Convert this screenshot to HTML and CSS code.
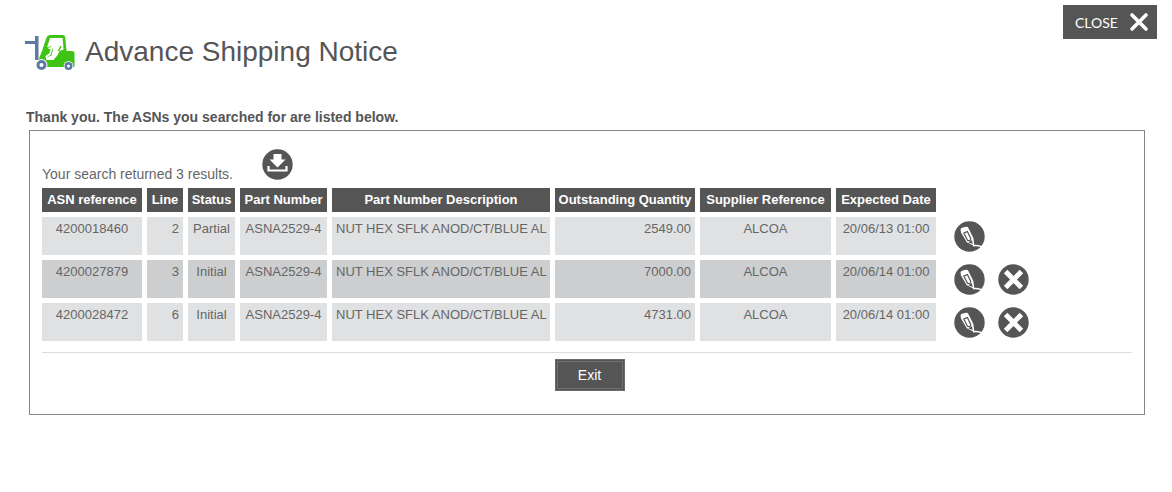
FILE: index.html
```
<!DOCTYPE html>
<html lang="en">
<head>
    <meta charset="UTF-8">
    <meta name="viewport" content="width=device-width, initial-scale=1.0">
    <title>Advance Shipping Notice</title>
    <link rel="stylesheet" href="styles.css">
</head>
<body>
    <!-- Shared icons -->
    <svg class="icon-defs" aria-hidden="true">
        <symbol id="icon-edit" viewBox="0 0 31 31">
            <circle cx="15.5" cy="15.5" r="15.2" fill="#555556"/>
            <path d="M7 11.5L6.6 9Q6.400 7.400 8 6.800L12 5.800Q13.600 5.600 14.400 7L19.400 17L20.400 25L12.800 21.200Z" fill="#fff"/>
            <path d="M9.800 12L13.400 10.600L16.800 17.600L16 19.600L13.600 19.400Z" fill="#fff" stroke="#555556" stroke-width="1.200"/>
            <path d="M14.200 21.200L18 19.200L18.600 23Z" fill="#555556"/>
            <path d="M19 24.800Q22.500 24 27.500 25.600" fill="none" stroke="#fff" stroke-width="1.500"/>
        </symbol>
        <symbol id="icon-delete" viewBox="0 0 31 31">
            <circle cx="15.5" cy="15.5" r="15.2" fill="#555556"/>
            <path d="M7.6 7.6L23.4 23.4M23.4 7.6L7.6 23.4" fill="none" stroke="#fff" stroke-width="5"/>
        </symbol>
    </svg>

    <header class="page-header">
        <div class="page-title">
            <svg class="logo" viewBox="0 0 50 36" aria-hidden="true">
                <path d="M0 7H10V2H13.5V26H10V10H0Z" fill="#5b7ba3"/>
                <!-- cab and body -->
                <path d="M25 1H38Q40 1 40.200 3L41.600 17H47Q49.500 17 49.500 19.500V33H20L13.500 26L17 17L21.500 3.500Q22.500 1 25 1Z" fill="#3fc314"/>
                <path d="M25 4H37.600L38.600 15.500L34.500 17L32 22L29 25H23L22.500 23L26.500 21.500L28 15L26 12.500L22 13.500Z" fill="#fff"/>
                <path d="M22 14Q25 11.500 28 13.500Q28 17 26 21L21 22L19 20Z" fill="#3fc314"/>
                <path d="M23.500 14.500L27 13.500L25 20L21.500 22.500L22 25H29" fill="none" stroke="#fff" stroke-width="1.800"/>
                <path d="M33.500 17L36 12" stroke="#3fc314" stroke-width="1.500"/>
                <!-- wheels -->
                <circle cx="16.500" cy="31" r="6" fill="#fff"/>
                <circle cx="16.500" cy="31" r="5" fill="#5b7ba3"/>
                <circle cx="16.500" cy="31" r="2" fill="#fff"/>
                <circle cx="43.500" cy="32" r="4.800" fill="#fff"/>
                <circle cx="43.500" cy="32" r="4" fill="#5b7ba3"/>
                <circle cx="43.500" cy="32" r="1.500" fill="#fff"/>
            </svg>
            <h1>Advance Shipping Notice</h1>
        </div>
        <button type="button" class="close-button">
            CLOSE
            <svg viewBox="0 0 20 20" aria-hidden="true">
                <path d="M3 3L17 17M17 3L3 17" fill="none" stroke="#fff" stroke-width="3.6" stroke-linecap="round"/>
            </svg>
        </button>
    </header>

    <main>
        <p class="message">Thank you. The ASNs you searched for are listed below.</p>

        <div class="results">
            <div class="results-bar">
                <p>Your search returned 3 results.</p>
                <button type="button" class="icon-button" aria-label="Download">
                    <svg viewBox="0 0 31 31" aria-hidden="true">
                        <circle cx="15.5" cy="15.5" r="15.2" fill="#555556"/>
                        <path d="M11.5 5H19.5V10.500H23.500L15.500 18.500L7.500 10.500H11.500Z" fill="#fff"/>
                        <path d="M6.500 17V21.500H24.500V17" fill="none" stroke="#fff" stroke-width="2.200"/>
                    </svg>
                </button>
            </div>

            <table class="asn-table">
                <colgroup>
                    <col class="col-reference">
                    <col class="col-line">
                    <col class="col-status">
                    <col class="col-part">
                    <col class="col-description">
                    <col class="col-quantity">
                    <col class="col-supplier">
                    <col class="col-date">
                    <col class="col-actions">
                </colgroup>
                <thead>
                    <tr>
                        <th>ASN reference</th>
                        <th>Line</th>
                        <th>Status</th>
                        <th>Part Number</th>
                        <th>Part Number Description</th>
                        <th>Outstanding Quantity</th>
                        <th>Supplier Reference</th>
                        <th>Expected Date</th>
                        <td class="actions"></td>
                    </tr>
                </thead>
                <tbody>
                    <tr>
                        <td>4200018460</td>
                        <td class="number">2</td>
                        <td>Partial</td>
                        <td>ASNA2529-4</td>
                        <td>NUT HEX SFLK ANOD/CT/BLUE AL</td>
                        <td class="number">2549.00</td>
                        <td>ALCOA</td>
                        <td>20/06/13 01:00</td>
                        <td class="actions">
                            <div class="action-list">
                                <button type="button" class="icon-button" aria-label="Edit"><svg><use href="#icon-edit"/></svg></button>
                            </div>
                        </td>
                    </tr>
                    <tr>
                        <td>4200027879</td>
                        <td class="number">3</td>
                        <td>Initial</td>
                        <td>ASNA2529-4</td>
                        <td>NUT HEX SFLK ANOD/CT/BLUE AL</td>
                        <td class="number">7000.00</td>
                        <td>ALCOA</td>
                        <td>20/06/14 01:00</td>
                        <td class="actions">
                            <div class="action-list">
                                <button type="button" class="icon-button" aria-label="Edit"><svg><use href="#icon-edit"/></svg></button>
                                <button type="button" class="icon-button" aria-label="Delete"><svg><use href="#icon-delete"/></svg></button>
                            </div>
                        </td>
                    </tr>
                    <tr>
                        <td>4200028472</td>
                        <td class="number">6</td>
                        <td>Initial</td>
                        <td>ASNA2529-4</td>
                        <td>NUT HEX SFLK ANOD/CT/BLUE AL</td>
                        <td class="number">4731.00</td>
                        <td>ALCOA</td>
                        <td>20/06/14 01:00</td>
                        <td class="actions">
                            <div class="action-list">
                                <button type="button" class="icon-button" aria-label="Edit"><svg><use href="#icon-edit"/></svg></button>
                                <button type="button" class="icon-button" aria-label="Delete"><svg><use href="#icon-delete"/></svg></button>
                            </div>
                        </td>
                    </tr>
                </tbody>
            </table>

            <div class="results-footer">
                <button type="button" class="exit-button">Exit</button>
            </div>
        </div>
    </main>
</body>
</html>
```
FILE: styles.css
```
body {
    font-family: "Liberation Sans", Arial, sans-serif;
    font-size: 14px;
    line-height: 16px;
    color: #555556;
    background-color: #ffffff;
    margin: 0;
}
h1, p {
    margin: 0;
}
button {
    font-family: inherit;
    color: #ffffff;
    background-color: #555556;
    cursor: pointer;
}
.icon-defs {
    display: none;
}

/* Header */
.page-header {
    display: flex;
    justify-content: space-between;
    align-items: flex-start;
    padding: 5px 15px 0 25px;
}
.page-title {
    display: flex;
    align-items: center;
    gap: 10px;
    padding-top: 29px;
}
.logo {
    width: 50px;
    height: 36px;
}
h1 {
    font-size: 28px;
    font-weight: normal;
    line-height: 36px;
}
.close-button {
    display: flex;
    align-items: center;
    justify-content: space-between;
    width: 94px;
    height: 34px;
    padding: 0 8px 0 12px;
    border: none;
    font-family: Lato, sans-serif;
    font-size: 14px;
}
.close-button svg {
    width: 20px;
    height: 20px;
}

/* Results */
main {
    padding: 39px 27px 0 26px;
}
.message {
    font-weight: bold;
}
.results {
    margin: 5px 0 0 3px;
    padding: 18px 12px 23px;
    border: 1px solid #858585;
}
.results-bar {
    display: flex;
    align-items: flex-end;
    gap: 29px;
    color: #666667;
}
.results-bar p {
    line-height: 12px;
}
.icon-button {
    width: 31px;
    height: 31px;
    padding: 0;
    border: none;
    background: none;
}
.icon-button svg {
    display: block;
    width: 31px;
    height: 31px;
}

/* Table */
.asn-table {
    table-layout: fixed;
    width: 997px;
    margin: 3px 0 0 -5px;
    border-spacing: 5px;
    font-size: 13px;
    white-space: nowrap;
}
.asn-table th {
    height: 24px;
    padding: 0;
    color: #ffffff;
    background-color: #555556;
}
.asn-table td {
    height: 34px;
    padding: 4px 4px 0;
    vertical-align: top;
    text-align: center;
    color: #666667;
    background-color: #e0e1e2;
}
.asn-table tbody tr:nth-child(even) td {
    background-color: #cdcecf;
}
.asn-table td.number {
    text-align: right;
}
.asn-table td.actions,
.asn-table tbody tr:nth-child(even) td.actions {
    height: auto;
    padding: 0 0 0 13px;
    vertical-align: middle;
    background: none;
}
.action-list {
    display: flex;
    gap: 13px;
}
.col-reference, .col-date {
    width: 100px;
}
.col-line {
    width: 36px;
}
.col-status {
    width: 47px;
}
.col-part {
    width: 87px;
}
.col-description {
    width: 218px;
}
.col-quantity {
    width: 140px;
}
.col-supplier {
    width: 131px;
}
.col-actions {
    width: 88px;
}

/* Footer */
.results-footer {
    display: flex;
    justify-content: center;
    margin-top: 6px;
    padding: 6px 0 0 5px;
    border-top: 1px solid #dddddd;
}
.exit-button {
    width: 70px;
    height: 32px;
    border: 1px solid #6a6a6b;
    outline: 1px solid #6f6f70;
    outline-offset: -3px;
    font-size: 14px;
}
```
